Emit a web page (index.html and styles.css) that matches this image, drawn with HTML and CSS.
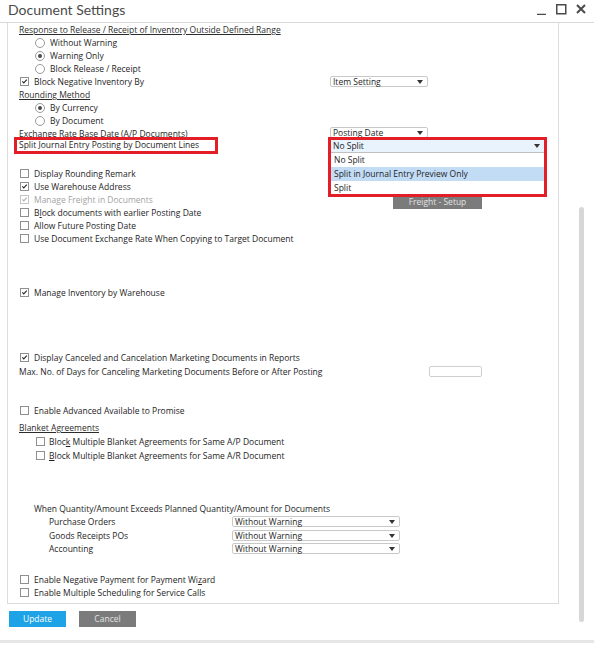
FILE: index.html
```html
<!DOCTYPE html>
<html lang="en">

<head>
    <meta charset="UTF-8">
    <meta name="viewport" content="width=device-width, initial-scale=1.0">
    <title>Document Settings</title>
    <link rel="stylesheet" href="styles.css">
</head>

<body>
    <div class="window">
        <header class="titlebar">
            <h1>Document Settings</h1>
            <div class="controls">
                <svg width="10" height="12" viewBox="0 0 10 12"><path d="M0 11.5 H9" /></svg>
                <svg width="11" height="12" viewBox="0 0 11 12"><rect x="0.75" y="1.75" width="9" height="9" /></svg>
                <svg width="10" height="12" viewBox="0 0 10 12"><path d="M1 2 L9 10 M9 2 L1 10" /></svg>
            </div>
        </header>

        <div class="main">
            <div class="content">
                <div class="panel">
                    <div class="row"><span class="head">Response to Release / Receipt of Inventory Outside Defined Range</span></div>
                    <div class="row opt"><span class="radio"></span>Without Warning</div>
                    <div class="row opt"><span class="radio on"></span>Warning Only</div>
                    <div class="row opt"><span class="radio"></span>Block Release / Receipt</div>
                    <div class="row cols">
                        <span class="lbl"><span class="chk on"><svg viewBox="0 0 9 9"><path d="M1.7 4.4 L3.6 6.4 L7.4 2.2" /></svg></span>Block Negative Inventory By</span>
                        <span class="select short">Item Setting</span>
                    </div>
                    <div class="row"><span class="head">Rounding Method</span></div>
                    <div class="row opt"><span class="radio on"></span>By Currency</div>
                    <div class="row opt"><span class="radio"></span>By Document</div>
                    <div class="row cols">
                        <span class="lbl">Exchange Rate Base Date (A/P Documents)</span>
                        <span class="select short up">Posting Date</span>
                    </div>
                    <div class="row cols">
                        <span class="lbl"><span class="marked">Split Journal Entry Posting by Document Lines</span></span>
                        <div class="combo">
                            <div class="popup">
                                <div class="select wide">No Split</div>
                                <ul class="list">
                                    <li>No Split</li>
                                    <li class="hover">Split in Journal Entry Preview Only</li>
                                    <li>Split</li>
                                </ul>
                            </div>
                        </div>
                    </div>

                    <div class="gap g14"></div>
                    <div class="row"><span class="chk"></span>Display Rounding Remark</div>
                    <div class="row"><span class="chk on"><svg viewBox="0 0 9 9"><path d="M1.7 4.4 L3.6 6.4 L7.4 2.2" /></svg></span>Use Warehouse Address</div>
                    <div class="row cols freight">
                        <span class="lbl off"><span class="chk on"><svg viewBox="0 0 9 9"><path d="M1.7 4.4 L3.6 6.4 L7.4 2.2" /></svg></span>Manage Freight in Documents</span>
                        <span class="btn dark">Freight - Setup</span>
                    </div>
                    <div class="row"><span class="chk"></span><span>B<u>l</u>ock documents with earlier Posting Date</span></div>
                    <div class="row"><span class="chk"></span>Allow Future Posting Date</div>
                    <div class="row"><span class="chk"></span>Use Document Exchange Rate When Copying to Target Document</div>

                    <div class="gap g41"></div>
                    <div class="row"><span class="chk on"><svg viewBox="0 0 9 9"><path d="M1.7 4.4 L3.6 6.4 L7.4 2.2" /></svg></span>Manage Inventory by Warehouse</div>

                    <div class="gap g52"></div>
                    <div class="row"><span class="chk on"><svg viewBox="0 0 9 9"><path d="M1.7 4.4 L3.6 6.4 L7.4 2.2" /></svg></span>Display Canceled and Cancelation Marketing Documents in Reports</div>
                    <div class="row cols days">
                        <span class="lbl">Max. No. of Days for Canceling Marketing Documents Before or After Posting</span>
                        <span class="field"></span>
                    </div>

                    <div class="gap g26"></div>
                    <div class="row"><span class="chk"></span>Enable Advanced Available to Promise</div>
                    <div class="gap g4"></div>
                    <div class="row"><span class="head">Blanket Agreements</span></div>
                    <div class="row sub"><span class="chk"></span><span>Bloc<u>k</u> Multiple Blanket Agreements for Same A/P Document</span></div>
                    <div class="row sub"><span class="chk"></span><span><u>B</u>lock Multiple Blanket Agreements for Same A/R Document</span></div>

                    <div class="gap g40"></div>
                    <div class="row qty-title">When Quantity/Amount Exceeds Planned Quantity/Amount for Documents</div>
                    <div class="row qty">
                        <span class="lbl">Purchase Orders</span>
                        <span class="select long">Without Warning</span>
                    </div>
                    <div class="row qty">
                        <span class="lbl">Goods Receipts POs</span>
                        <span class="select long">Without Warning</span>
                    </div>
                    <div class="row qty">
                        <span class="lbl">Accounting</span>
                        <span class="select long">Without Warning</span>
                    </div>

                    <div class="gap g18"></div>
                    <div class="row"><span class="chk"></span><span>Enable Negative Payment for Payment Wi<u>z</u>ard</span></div>
                    <div class="row"><span class="chk"></span>Enable Multiple Scheduling for Service Calls</div>
                </div>

                <div class="actions">
                    <span class="btn blue">Update</span>
                    <span class="btn dark">Cancel</span>
                </div>
            </div>
            <div class="scroll"></div>
        </div>
        <div class="bottombar"></div>
    </div>
</body>

</html>
```

FILE: styles.css
```css
/* Reset CSS */
* {
    margin: 0;
    padding: 0;
    box-sizing: border-box;
}

body {
    font-family: 'Open Sans', sans-serif;
    font-size: 8.5px;
    color: #1e1e1e;
    background: #fff;
}

.window {
    width: 594px;
    height: 646px;
    overflow: hidden;
}

/* title bar */
.titlebar {
    height: 23px;
    border-bottom: 1px solid #d9d9d9;
    display: flex;
    align-items: center;
    justify-content: space-between;
}

.titlebar h1 {
    font-family: 'Lato', 'Open Sans', sans-serif;
    font-size: 14px;
    font-weight: normal;
    color: #4a4a4a;
    padding-left: 8px;
    line-height: 22px;
    margin-top: -2px;
}

.controls {
    display: flex;
    gap: 9px;
    padding-right: 8px;
    margin-top: -5px;
}

.controls svg {
    fill: none;
    stroke: #4a4a4a;
    stroke-width: 1.5;
}

.controls svg:last-child {
    stroke-width: 2;
}

/* main area */
.main {
    display: flex;
}

.content {
    width: 559px;
}

.panel {
    margin-left: 7px;
    width: 552px;
    border: 1px solid #dcdcdc;
    border-top: none;
    padding-left: 11px;
    padding-bottom: 4px;
}

.scroll {
    margin-left: 20px;
    margin-top: 184px;
    width: 5px;
    height: 415px;
    background: #d7d7d7;
    border-radius: 3px;
}

.row {
    height: 13px;
    line-height: 13px;
    display: flex;
    align-items: center;
    white-space: nowrap;
}

.head {
    text-decoration: underline;
    color: #2c2c2c;
}

.opt {
    padding-left: 16px;
}

.sub {
    height: 14px;
    padding-left: 17px;
}

.sub .chk {
    margin-left: 0;
    margin-right: 4px;
}

.gap.g4 { height: 4px; }
.gap.g14 { height: 14px; }
.gap.g18 { height: 17px; }
.gap.g26 { height: 26px; }
.gap.g40 { height: 40px; }
.gap.g41 { height: 41px; }
.gap.g52 { height: 52px; }

/* radios and checkboxes */
.radio {
    width: 10px;
    height: 10px;
    border: 1px solid #9a9a9a;
    border-radius: 50%;
    margin-right: 5px;
    display: inline-flex;
    align-items: center;
    justify-content: center;
    background: #fff;
}

.radio.on::after {
    content: "";
    width: 4px;
    height: 4px;
    border-radius: 50%;
    background: #4a4a4a;
}

.chk {
    width: 9px;
    height: 9px;
    border: 1px solid #8f8f8f;
    margin-left: 1px;
    margin-right: 5px;
    display: inline-block;
    background: #fff;
    flex: none;
}

.chk svg {
    display: block;
    width: 7px;
    height: 7px;
    fill: none;
    stroke: #2a2a2a;
    stroke-width: 1.5;
}

.off {
    color: #a3a3a3;
}

.off .chk {
    border-color: #c4c4c4;
}

.off .chk svg {
    stroke: #b0b0b0;
}

/* rows with a control on the right */
.cols {
    display: grid;
    grid-template-columns: 311px 1fr;
    align-items: center;
}

.cols .lbl {
    display: flex;
    align-items: center;
}

.freight {
    grid-template-columns: 374px 89px;
    align-items: start;
}

.days {
    height: 14px;
    grid-template-columns: 410px 53px;
}

.qty-title {
    padding-left: 15px;
}

.qty {
    height: 13.5px;
    display: grid;
    grid-template-columns: 183px 168px;
    padding-left: 30px;
    align-items: center;
}

.select {
    position: relative;
    height: 11px;
    line-height: 10px;
    border: 1px solid #c9c9c9;
    border-radius: 2px;
    background: #fff;
    padding-left: 2px;
    display: block;
}

.select::after {
    content: "";
    position: absolute;
    right: 4px;
    top: 3px;
    border-left: 3px solid transparent;
    border-right: 3px solid transparent;
    border-top: 4px solid #333;
}

.select.short {
    width: 98px;
}

.select.up {
    margin-top: -3px;
}

.select.long {
    width: 168px;
}

.field {
    display: block;
    width: 53px;
    height: 11px;
    border: 1px solid #cfcfcf;
    border-radius: 2px;
}

/* highlighted label and open dropdown */
.marked {
    display: inline-block;
    height: 11px;
    line-height: 10px;
    margin-left: -2px;
    padding-left: 2px;
    width: 198px;
    outline: 3px solid #e41e26;
    margin-top: -2px;
}

.combo {
    position: relative;
    height: 13px;
}

.popup {
    position: absolute;
    top: -3px;
    left: -2px;
    width: 219px;
    height: 60px;
    border: 3px solid #e41e26;
    background: #fff;
    overflow: hidden;
    z-index: 2;
}

.select.wide {
    height: 13px;
    line-height: 12px;
    border: none;
    border-bottom: 1px solid #c0c0c0;
    border-radius: 0;
    background: #e8f3fd;
}

.select.wide::after {
    top: 4px;
}

.list {
    list-style: none;
}

.list li {
    height: 14px;
    line-height: 14px;
    padding-left: 3px;
}

.list li.hover {
    background: #c3dcf6;
}

/* buttons */
.btn {
    display: inline-flex;
    align-items: center;
    justify-content: center;
    height: 16px;
    color: #fff;
    font-size: 8.5px;
}

.btn.dark {
    background: #7b7b7b;
    color: #e2e2e2;
}

.btn.blue {
    background: #1ea3e6;
}

.freight .btn {
    width: 89px;
}

.actions {
    display: flex;
    gap: 13px;
    margin-top: 7px;
    padding-left: 9px;
}

.actions .btn {
    width: 57px;
}

.bottombar {
    margin-top: 13px;
    height: 6px;
    border-top: 3px solid #e6e6e6;
}
```
